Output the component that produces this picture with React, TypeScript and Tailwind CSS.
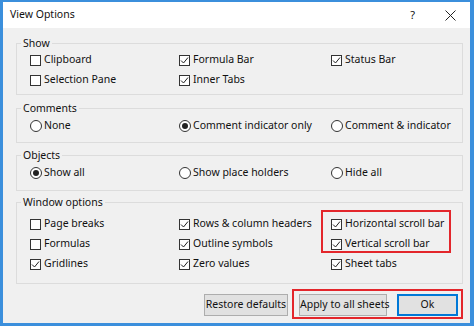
import React from "react";

const font = { fontFamily: '"Segoe UI", "Noto Sans", sans-serif' };

function Check({ checked, label }: { checked?: boolean; label: string }) {
  return (
    <div className="flex h-[20px] items-center gap-[3px] whitespace-nowrap">
      <span className="flex h-[11px] w-[11px] items-center justify-center border border-[#333333] bg-white">
        {checked && (
          <svg width="9" height="9" viewBox="0 0 9 9">
            <path d="M1 4.5 L3.5 7 L8 1.5" fill="none" stroke="#222" strokeWidth="1" />
          </svg>
        )}
      </span>
      <span>{label}</span>
    </div>
  );
}

function Radio({ checked, label }: { checked?: boolean; label: string }) {
  return (
    <div className="flex h-[20px] items-center gap-[2px] whitespace-nowrap">
      <span className="flex h-[12px] w-[12px] items-center justify-center rounded-full border border-[#333333] bg-white">
        {checked && <span className="h-[6px] w-[6px] rounded-full bg-[#222]" />}
      </span>
      <span>{label}</span>
    </div>
  );
}

function Group({ title, className, children }: { title: string; className: string; children: React.ReactNode }) {
  return (
    <fieldset className={"border border-[#dcdcdc] " + className}>
      <legend className="ml-[4px] h-[14px] px-[2px] leading-[14px]">{title}</legend>
      {children}
    </fieldset>
  );
}

export default function App() {
  return (
    <div
      className="flex h-[326px] w-[474px] flex-col bg-[#3b8fdc] pb-[3px] pl-[3px] pr-[4px] pt-[2px] text-[10.5px] text-[#111]"
      style={font}
    >
      <div className="flex h-[26px] items-center bg-white pl-[7px] pr-[14px]">
        <span className="flex-1 text-[10.5px]">View Options</span>
        <span className="mr-[30px] text-[11px]">?</span>
        <svg width="11" height="11" viewBox="0 0 11 11">
          <path d="M0.5 0.5 L10.5 10.5 M10.5 0.5 L0.5 10.5" stroke="#222" strokeWidth="1" />
        </svg>
      </div>
      <div className="flex flex-1 flex-col bg-[#f0f0f0] pl-[13px] pr-[7px] pt-[8px]">
        <Group title="Show" className="pb-[4px]">
          <div className="grid grid-cols-[149px_152px_1fr] pl-[13px]">
            <Check label="Clipboard" />
            <Check checked label="Formula Bar" />
            <Check checked label="Status Bar" />
            <Check label="Selection Pane" />
            <Check checked label="Inner Tabs" />
          </div>
        </Group>
        <Group title="Comments" className="mt-[6px] pb-[6px]">
          <div className="grid grid-cols-[149px_152px_1fr] pl-[13px] pt-[1px]">
            <Radio label="None" />
            <Radio checked label="Comment indicator only" />
            <Radio label="Comment &amp; indicator" />
          </div>
        </Group>
        <Group title="Objects" className="mt-[5px] pb-[7px]">
          <div className="grid grid-cols-[149px_152px_1fr] pl-[13px] pt-[1px]">
            <Radio checked label="Show all" />
            <Radio label="Show place holders" />
            <Radio label="Hide all" />
          </div>
        </Group>
        <Group title="Window options" className="mt-[4px] pb-[9px]">
          <div className="relative grid grid-cols-[149px_152px_1fr] pl-[13px] pt-[5px]">
            <Check label="Page breaks" />
            <Check checked label="Rows & column headers" />
            <Check checked label="Horizontal scroll bar" />
            <Check label="Formulas" />
            <Check checked label="Outline symbols" />
            <Check checked label="Vertical scroll bar" />
            <Check checked label="Gridlines" />
            <Check checked label="Zero values" />
            <Check checked label="Sheet tabs" />
            <div className="pointer-events-none absolute left-[304px] top-[1px] h-[43px] w-[130px] border-2 border-[#e3262b]" />
          </div>
        </Group>
        <div className="mt-[5px] flex items-start justify-end">
          <button className="mr-[4px] mt-[5px] h-[22px] w-[84px] whitespace-nowrap border border-[#adadad] bg-[#e1e1e1] text-[10.5px]">
            Restore defaults
          </button>
          <div className="flex gap-[10px] border-2 border-[#e3262b] pb-[1px] pl-[5px] pr-[3px] pt-[3px]">
            <button className="h-[22px] w-[88px] whitespace-nowrap border border-[#adadad] bg-[#e1e1e1] text-[10.5px]">
              Apply to all sheets
            </button>
            <button className="h-[22px] w-[61px] border-2 border-[#0078d7] bg-[#e1e1e1] text-[10.5px]">
              Ok
            </button>
          </div>
        </div>
      </div>
    </div>
  );
}
